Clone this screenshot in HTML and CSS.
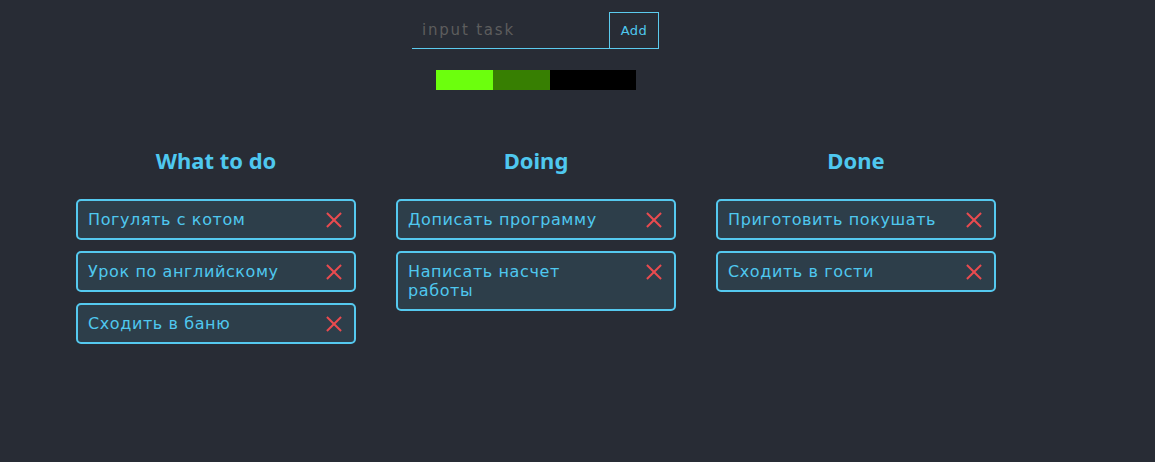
FILE: index.html
```html
<!DOCTYPE html>
<html lang="ru">
<head>
  <meta charset="UTF-8" />
  <meta name="viewport" content="width=device-width, initial-scale=1" />
  <title>Todo</title>
  <link rel="stylesheet" href="styles.css">
</head>
<body>
  <div class="app">
    <form class="add-form">
      <input class="task-input" type="text" placeholder="input task">
      <button class="add-btn" type="button">Add</button>
    </form>

    <div class="progress">
      <div class="progress-part todo" style="width: 57px"></div>
      <div class="progress-part doing" style="width: 57px"></div>
    </div>

    <div class="board">
      <div class="column">
        <h2 class="column-title">What to do</h2>
        <div class="card"><span class="card-text">Погулять с котом</span><span class="remove"></span></div>
        <div class="card"><span class="card-text">Урок по английскому</span><span class="remove"></span></div>
        <div class="card"><span class="card-text">Сходить в баню</span><span class="remove"></span></div>
      </div>
      <div class="column">
        <h2 class="column-title">Doing</h2>
        <div class="card"><span class="card-text">Дописать программу</span><span class="remove"></span></div>
        <div class="card"><span class="card-text">Написать насчет работы</span><span class="remove"></span></div>
      </div>
      <div class="column">
        <h2 class="column-title">Done</h2>
        <div class="card"><span class="card-text">Приготовить покушать</span><span class="remove"></span></div>
        <div class="card"><span class="card-text">Сходить в гости</span><span class="remove"></span></div>
      </div>
    </div>
  </div>
</body>
</html>
```

FILE: styles.css
```css
body {
  margin: 0;
  background: #282c35;
  color: #4fc8ef;
  font-family: "DejaVu Sans", sans-serif;
}
.app {
  width: 960px;
  margin-left: 56px;
  padding-top: 12px;
}
.add-form {
  display: flex;
  width: 247px;
  margin-left: 356px;
  border-bottom: 1px solid #5ccbee;
}
.task-input {
  flex: 1;
  min-width: 0;
  background: transparent;
  border: none;
  outline: none;
  padding: 0 10px;
  font-family: inherit;
  font-size: 15px;
  letter-spacing: 1.8px;
  color: #ccc;
}
.task-input::placeholder {
  color: #5d5d5d;
}
.add-btn {
  width: 50px;
  height: 36px;
  background: transparent;
  border: 1px solid #5ccbee;
  border-bottom: none;
  color: #4fc8ef;
  font-family: inherit;
  font-size: 13px;
  letter-spacing: 0.5px;
  padding: 0;
}
.progress {
  display: flex;
  width: 200px;
  height: 20px;
  margin: 21px auto 0;
  background: #000;
}
.progress-part.todo {
  background: #6cff0d;
}
.progress-part.doing {
  background: #377f02;
}
.board {
  display: flex;
  margin-top: 55px;
}
.column {
  width: 320px;
  display: flex;
  flex-direction: column;
  align-items: center;
  gap: 11px;
}
.column-title {
  margin: 0 0 13px;
  font-family: "Noto Sans", sans-serif;
  font-size: 22px;
  line-height: 30px;
  font-weight: bold;
}
.card {
  box-sizing: border-box;
  width: 280px;
  display: flex;
  align-items: flex-start;
  justify-content: space-between;
  padding: 9px 12px 9px 10px;
  background: #2d3e4a;
  border: 2px solid #55c9ef;
  border-radius: 5px;
  font-size: 16px;
  line-height: 19px;
  letter-spacing: 0.6px;
}
.card-text {
  max-width: 214px;
}
.remove {
  position: relative;
  width: 16px;
  height: 16px;
  margin-top: 2px;
  flex-shrink: 0;
}
.remove::before,
.remove::after {
  content: "";
  position: absolute;
  left: -2px;
  top: 7px;
  width: 20px;
  height: 2px;
  background: #ea4b4f;
  transform: rotate(45deg);
}
.remove::after {
  transform: rotate(-45deg);
}
```
